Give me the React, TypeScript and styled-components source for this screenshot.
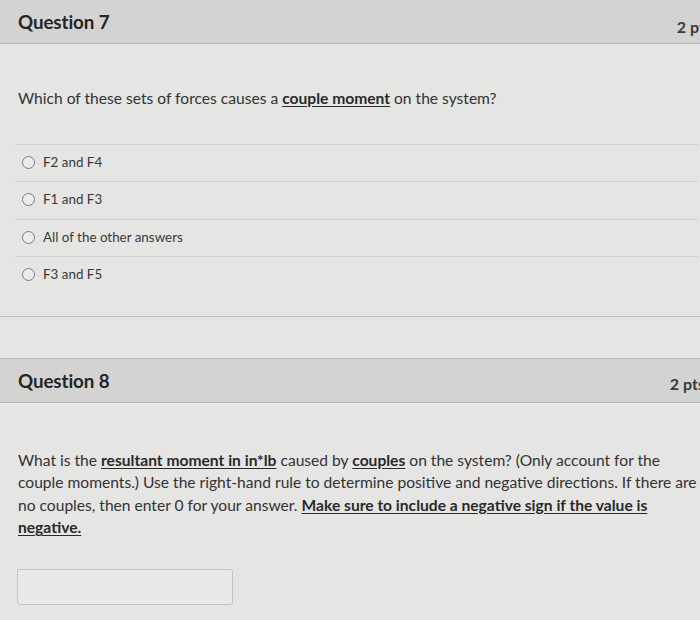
import React from "react";
import styled, { createGlobalStyle } from "styled-components";

const Global = createGlobalStyle`
  html, body {
    margin: 0;
    padding: 0;
    background: #e5e5e4;
    overflow: hidden;
  }
  body {
    font-family: "Lato", "Liberation Sans", sans-serif;
    color: #2e2e2e;
  }
`;

const Page = styled.div`
  width: 700px;
  height: 620px;
  overflow: hidden;
  background: #e5e5e4;
`;

const Question = styled.section<{ $gapTop?: number }>`
  margin-top: ${(p) => p.$gapTop ?? 0}px;
  border-top: ${(p) => (p.$gapTop ? "1px solid #b8b8b7" : "none")};
`;

const Header = styled.header<{ $h: number }>`
  height: ${(p) => p.$h}px;
  display: flex;
  align-items: center;
  justify-content: space-between;
  padding-left: 18px;
  background: #d3d3d2;
  border-bottom: 1px solid #b6b6b5;
`;

const Title = styled.h2`
  margin: 0;
  font-size: 18.8px;
  font-weight: 700;
  letter-spacing: -0.1px;
  color: #262626;
`;

const Points = styled.span<{ $over: number }>`
  font-size: 16px;
  font-weight: 700;
  color: #3a3a3a;
  white-space: nowrap;
  margin-right: ${(p) => -p.$over}px;
  margin-top: ${(p) => p.$over / 2 + 4}px;
`;

const Body = styled.div<{ $pt: number; $pb: number; $line?: boolean }>`
  padding: ${(p) => p.$pt}px 2px ${(p) => p.$pb}px 18px;
  border-bottom: ${(p) => (p.$line ? "1px solid #bdbdbc" : "none")};
`;

const Prompt = styled.p`
  margin: 0;
  font-size: 15.6px;
  line-height: 22.5px;
  color: #333;
`;

const Strong = styled.span`
  font-weight: 700;
  text-decoration: underline;
  text-underline-offset: 2px;
  color: #2a2a2a;
`;

const Answers = styled.ul`
  list-style: none;
  margin: 34px 0 0 -3px;
  padding: 0;
`;

const Answer = styled.li`
  height: 37.5px;
  box-sizing: border-box;
  border-top: 1px solid #cfcfce;
  display: flex;
  align-items: flex-start;
  padding: 8px 0 0 7px;
  gap: 8px;
`;

const Radio = styled.span`
  width: 11px;
  height: 11px;
  margin-top: 3px;
  border-radius: 50%;
  border: 1.5px solid #7c7c7c;
  background: #ececeb;
  flex-shrink: 0;
`;

const AnswerText = styled.span`
  font-size: 13.4px;
  line-height: 18px;
  color: #3a3a3a;
`;

const AnswerInput = styled.div`
  width: 216px;
  height: 36px;
  margin: 30px 0 0 -1px;
  box-sizing: border-box;
  border: 1px solid #c4c4c3;
  border-radius: 3px;
  background: #e9e9e8;
`;

const options = ["F2 and F4", "F1 and F3", "All of the other answers", "F3 and F5"];

export default function App() {
  return (
    <Page>
      <Global />
      <Question>
        <Header $h={43}>
          <Title>Question 7</Title>
          <Points $over={12}>2 pts</Points>
        </Header>
        <Body $pt={43} $pb={22} $line>
          <Prompt>
            Which of these sets of forces causes a <Strong>couple moment</Strong> on the system?
          </Prompt>
          <Answers>
            {options.map((o) => (
              <Answer key={o}>
                <Radio />
                <AnswerText>{o}</AnswerText>
              </Answer>
            ))}
          </Answers>
        </Body>
      </Question>
      <Question $gapTop={41}>
        <Header $h={43}>
          <Title>Question 8</Title>
          <Points $over={5}>2 pts</Points>
        </Header>
        <Body $pt={46} $pb={14}>
          <Prompt>
            What is the <Strong>resultant moment in in*lb</Strong> caused by <Strong>couples</Strong> on the
            system? (Only account for the couple moments.) Use the right-hand rule to determine positive and
            negative directions. If there are no couples, then enter 0 for your answer.{" "}
            <Strong>Make sure to include a negative sign if the value is negative.</Strong>
          </Prompt>
          <AnswerInput />
        </Body>
      </Question>
    </Page>
  );
}
